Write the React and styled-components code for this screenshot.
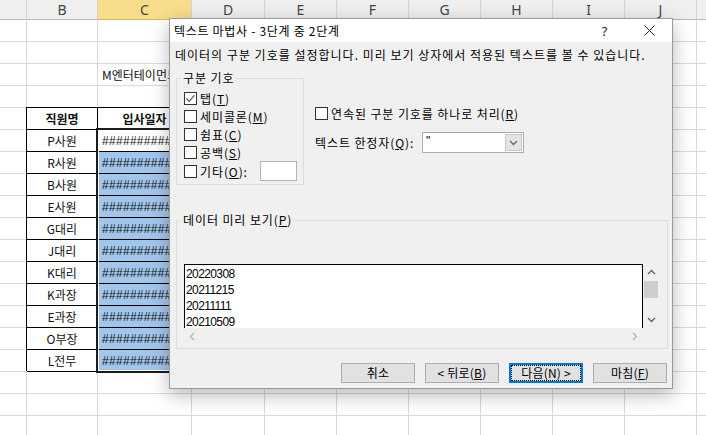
import React from 'react'
import styled, { createGlobalStyle, css } from 'styled-components'

const GlobalStyle = createGlobalStyle`
  html, body {
    margin: 0;
    padding: 0;
    background: #fff;
  }
  body {
    font-family: "Noto Sans CJK KR", "Liberation Sans", sans-serif;
  }
`

const COLS = [27, 71, 94, 73, 72, 72, 72, 72, 72, 72, 40]
const LETTERS = ['', 'B', 'C', 'D', 'E', 'F', 'G', 'H', 'I', 'J', '']
const NAMES = ['P사원', 'R사원', 'B사원', 'E사원', 'G대리', 'J대리', 'K대리', 'K과장', 'E과장', 'O부장', 'L전무']
const PREVIEW = ['20220308', '20211215', '20211111', '20210509']

const Page = styled.div`
  position: relative;
  width: 706px;
  height: 435px;
  overflow: hidden;
  background: #fff;
`

const Sheet = styled.div`
  display: grid;
  grid-template-columns: ${COLS.map((w) => `${w}px`).join(' ')};
  grid-template-rows: 20px repeat(19, 22px);
`

const ColHead = styled.div`
  box-sizing: border-box;
  display: flex;
  align-items: center;
  justify-content: center;
  background: ${(p) => (p.$active ? '#f8dd8c' : '#efefef')};
  border-right: 1px solid #d4d4d4;
  border-bottom: 1px solid ${(p) => (p.$active ? '#d6b65a' : '#b8b8b8')};
  font-family: "Noto Sans", "Liberation Sans", sans-serif;
  font-size: 14px;
  color: #444;
`

const Cell = styled.div`
  box-sizing: border-box;
  display: flex;
  align-items: center;
  justify-content: ${(p) => (p.$center ? 'center' : 'flex-start')};
  padding: 0 ${(p) => (p.$center ? 0 : 4)}px;
  overflow: hidden;
  white-space: nowrap;
  border-right: 1px solid #d9d9d9;
  border-bottom: 1px solid #d9d9d9;
  background: ${(p) => p.$fill || '#fff'};
  font-size: 12px;
  font-weight: ${(p) => (p.$bold ? 700 : 400)};
  color: #111;
  ${(p) =>
    p.$table &&
    css`
      border-right-color: #000;
      border-bottom-color: ${p.$fill ? '#5e7993' : '#000'};
      box-shadow: -1px -1px 0 #000;
    `}
`

const Hashes = styled.span`
  font-family: "Liberation Sans", sans-serif;
  font-size: 12px;
  letter-spacing: 0.3px;
`

const Selection = styled.div`
  position: absolute;
  left: 96px;
  top: 128px;
  width: 98px;
  height: 245px;
  box-sizing: border-box;
  border: 2px solid #1c1c1c;
  box-shadow: inset 0 0 0 1px #fff;
  pointer-events: none;
`

const Dialog = styled.div`
  position: absolute;
  left: 169px;
  top: 18px;
  width: 504px;
  height: 371px;
  box-sizing: border-box;
  display: flex;
  flex-direction: column;
  background: #f0f0f0;
  border: 1px solid #9a9a9a;
  box-shadow: 0 6px 18px rgba(0, 0, 0, 0.28);
  font-size: 12px;
  letter-spacing: 0.9px;
  color: #000;
`

const TitleBar = styled.div`
  display: flex;
  align-items: center;
  height: 23px;
  background: #fff;
  padding-left: 4px;
`

const TitleText = styled.div`
  flex: 1;
  font-size: 12px;
  letter-spacing: 0.7px;
`

const TitleButton = styled.div`
  width: 45px;
  height: 23px;
  display: flex;
  align-items: center;
  justify-content: center;
  font-family: "Noto Sans", sans-serif;
  font-size: 13px;
  letter-spacing: 0;
  color: #222;
`

const Body = styled.div`
  flex: 1;
  padding: 5px 5px 0;
`

const Description = styled.div`
  line-height: 16px;
  white-space: nowrap;
  letter-spacing: 1px;
`

const OptionsRow = styled.div`
  display: flex;
  margin-top: 15px;
`

const Group = styled.div`
  position: relative;
  box-sizing: border-box;
  margin-left: 1px;
  width: ${(p) => p.$w}px;
  height: ${(p) => p.$h}px;
  margin-top: ${(p) => p.$top || 0}px;
  border: 1px solid #dcdcdc;
  padding: ${(p) => p.$pad};
`

const GroupTitle = styled.span`
  position: absolute;
  left: 4px;
  top: -9px;
  padding: 0 2px;
  background: #f0f0f0;
  line-height: 16px;
`

const CheckRow = styled.div`
  display: flex;
  align-items: center;
  gap: 3px;
  height: ${(p) => p.$h || 18}px;
  white-space: nowrap;
`

const Box = styled.span`
  box-sizing: border-box;
  width: 13px;
  height: 13px;
  flex: 0 0 13px;
  border: 1px solid #333;
  background: #fff;
  display: flex;
  align-items: center;
  justify-content: center;
`

const U = styled.u`
  text-underline-offset: 1px;
`

const SmallInput = styled.span`
  box-sizing: border-box;
  width: 37px;
  height: 20px;
  margin-left: auto;
  background: #fff;
  border: 1px solid #b4b4b4;
`

const RightOptions = styled.div`
  margin-left: 11px;
  padding-top: 26px;
`

const QualifierRow = styled.div`
  display: flex;
  align-items: center;
  margin-top: 10px;
  height: 21px;
`

const QualifierLabel = styled.span`
  flex: 0 0 107px;
  white-space: nowrap;
`

const Combo = styled.div`
  box-sizing: border-box;
  width: 102px;
  height: 21px;
  display: flex;
  align-items: center;
  background: #fff;
  border: 1px solid #acacac;
  padding: 1px;
`

const ComboValue = styled.span`
  flex: 1;
  padding-left: 2px;
  font-family: "Liberation Sans", sans-serif;
  font-size: 12px;
  line-height: 14px;
  align-self: flex-start;
`

const ComboArrow = styled.span`
  box-sizing: border-box;
  width: 17px;
  height: 17px;
  display: flex;
  align-items: center;
  justify-content: center;
  background: #e5e5e5;
  border: 1px solid #c6c6c6;
`

const PreviewFrame = styled.div`
  display: grid;
  grid-template-columns: 1fr 16px;
  grid-template-rows: 64px 17px;
  width: 475px;
`

const PreviewText = styled.div`
  box-sizing: border-box;
  background: #fff;
  border: 1px solid #000;
  border-bottom: none;
  padding: 1px 0 0 1px;
  overflow: hidden;
  font-family: "Liberation Sans", sans-serif;
  font-size: 12px;
  letter-spacing: -0.6px;
  line-height: 16px;
`

const VScroll = styled.div`
  display: flex;
  flex-direction: column;
  background: #f0f0f0;
`

const HScroll = styled.div`
  display: flex;
  justify-content: space-between;
  background: #f0f0f0;
`

const Arrow = styled.span`
  width: ${(p) => p.$w || 16}px;
  height: 17px;
  display: flex;
  align-items: center;
  justify-content: center;
`

const Thumb = styled.span`
  height: 17px;
  margin: 0 1px;
  background: #cdcdcd;
`

const Spacer = styled.span`
  flex: 1;
`

const ButtonRow = styled.div`
  display: flex;
  justify-content: flex-end;
  gap: 10px;
  margin-top: 14px;
`

const Button = styled.button`
  box-sizing: border-box;
  width: 74px;
  height: 20px;
  padding: 0;
  background: #e1e1e1;
  border: 1px solid #adadad;
  font-family: "Noto Sans CJK KR", "Liberation Sans", sans-serif;
  font-size: 12px;
  letter-spacing: 0.2px;
  color: #000;
  line-height: 16px;
  ${(p) =>
    p.$default &&
    css`
      border-color: #0078d7;
      box-shadow: inset 0 0 0 1px #0078d7;
      outline: 1px dotted #000;
      outline-offset: -3px;
    `}
`

const Check = () => (
  <svg width="11" height="11" viewBox="0 0 11 11">
    <polyline points="1.5,5.5 4.2,8.3 9.5,2.2" fill="none" stroke="#555" strokeWidth="1.2" />
  </svg>
)

const Chevron = ({ dir, color }) => {
  const pts = {
    up: '1,6 4.5,2.5 8,6',
    down: '1,3 4.5,6.5 8,3',
    left: '6,1 2.5,4.5 6,8',
    right: '3,1 6.5,4.5 3,8',
  }[dir]
  return (
    <svg width="9" height="9" viewBox="0 0 9 9">
      <polyline points={pts} fill="none" stroke={color} strokeWidth="1.3" />
    </svg>
  )
}

const CheckOption = ({ checked, children, h }) => (
  <CheckRow $h={h}>
    <Box>{checked && <Check />}</Box>
    <span>{children}</span>
  </CheckRow>
)

const rowCells = (r) => {
  // cells for row r (0-based, below the column letters)
  const cells = COLS.map((_, c) => <Cell key={c} />)
  if (r === 2) {
    cells[2] = <Cell key={2}>M엔터테이먼트 직원 현황</Cell>
  }
  if (r === 4) {
    cells[1] = <Cell key={1} $table $center $bold>직원명</Cell>
    cells[2] = <Cell key={2} $table $center $bold>입사일자</Cell>
  }
  if (r >= 5 && r < 5 + NAMES.length) {
    const first = r === 5
    cells[1] = <Cell key={1} $table $center>{NAMES[r - 5]}</Cell>
    cells[2] = (
      <Cell key={2} $table $fill={first ? undefined : '#a1c6ec'}>
        <Hashes>##############</Hashes>
      </Cell>
    )
  }
  return cells
}

const App = () => (
  <>
    <GlobalStyle />
    <Page>
      <Sheet>
        {LETTERS.map((l, i) => (
          <ColHead key={`h${i}`} $active={l === 'C'}>{l}</ColHead>
        ))}
        {Array.from({ length: 19 }, (_, r) => (
          <React.Fragment key={r}>{rowCells(r)}</React.Fragment>
        ))}
      </Sheet>
      <Selection />

      <Dialog>
        <TitleBar>
          <TitleText>텍스트 마법사 - 3단계 중 2단계</TitleText>
          <TitleButton>?</TitleButton>
          <TitleButton>
            <svg width="11" height="11" viewBox="0 0 11 11">
              <path d="M0.5 0.5 L10.5 10.5 M10.5 0.5 L0.5 10.5" stroke="#222" strokeWidth="1" />
            </svg>
          </TitleButton>
        </TitleBar>
        <Body>
          <Description>
            데이터의 구분 기호를 설정합니다. 미리 보기 상자에서 적용된 텍스트를 볼 수 있습니다.
          </Description>
          <OptionsRow>
            <Group $w={128} $h={107} $pad="10px 6px 0 7px">
              <GroupTitle>구분 기호</GroupTitle>
              <CheckOption checked>탭(<U>T</U>)</CheckOption>
              <CheckOption>세미콜론(<U>M</U>)</CheckOption>
              <CheckOption>쉼표(<U>C</U>)</CheckOption>
              <CheckOption>공백(<U>S</U>)</CheckOption>
              <CheckRow $h={20}>
                <Box />
                <span>기타(<U>O</U>):</span>
                <SmallInput />
              </CheckRow>
            </Group>
            <RightOptions>
              <CheckOption>연속된 구분 기호를 하나로 처리(<U>R</U>)</CheckOption>
              <QualifierRow>
                <QualifierLabel>텍스트 한정자(<U>Q</U>):</QualifierLabel>
                <Combo>
                  <ComboValue>"</ComboValue>
                  <ComboArrow>
                    <Chevron dir="down" color="#666" />
                  </ComboArrow>
                </Combo>
              </QualifierRow>
            </RightOptions>
          </OptionsRow>

          <Group $w={492} $h={129} $top={35} $pad="43px 0 0 7px">
            <GroupTitle>데이터 미리 보기(<U>P</U>)</GroupTitle>
            <PreviewFrame>
              <PreviewText>
                {PREVIEW.map((d) => (
                  <div key={d}>{d}</div>
                ))}
              </PreviewText>
              <VScroll>
                <Arrow>
                  <Chevron dir="up" color="#606060" />
                </Arrow>
                <Thumb />
                <Spacer />
                <Arrow>
                  <Chevron dir="down" color="#606060" />
                </Arrow>
              </VScroll>
              <HScroll>
                <Arrow $w={17}>
                  <Chevron dir="left" color="#b4b4b4" />
                </Arrow>
                <Arrow $w={17}>
                  <Chevron dir="right" color="#b4b4b4" />
                </Arrow>
              </HScroll>
              <span />
            </PreviewFrame>
          </Group>

          <ButtonRow>
            <Button>취소</Button>
            <Button>&lt; 뒤로(<U>B</U>)</Button>
            <Button $default>다음(N) &gt;</Button>
            <Button>마침(<U>F</U>)</Button>
          </ButtonRow>
        </Body>
      </Dialog>
    </Page>
  </>
)

export default App
